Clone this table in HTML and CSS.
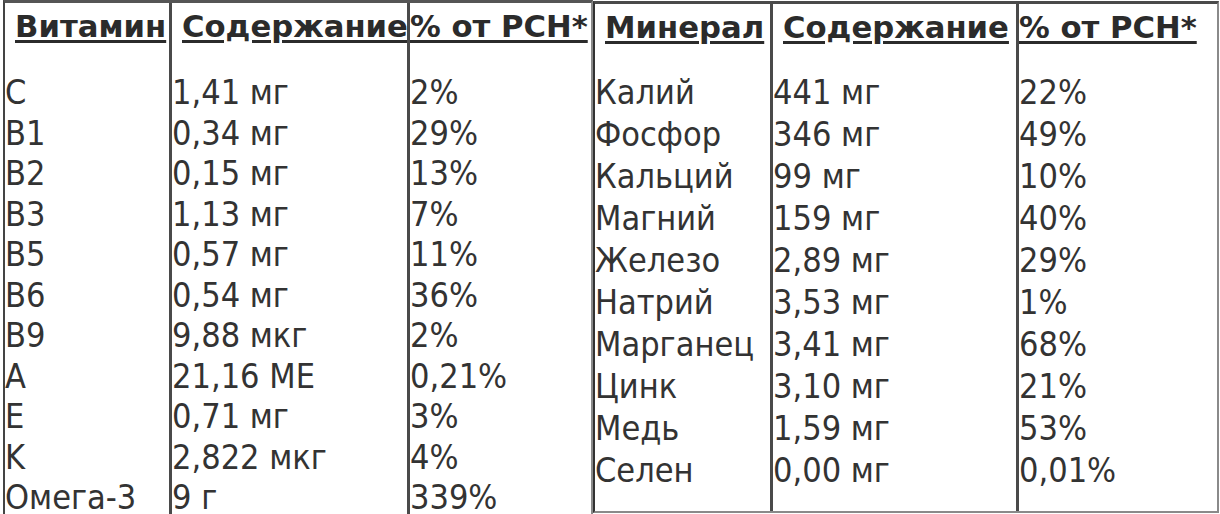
FILE: index.html
```html
<!DOCTYPE html>
<html lang="ru">
<head>
<meta charset="utf-8">
<title>Витамины и минералы</title>
<link rel="stylesheet" href="styles.css">
</head>
<body>
<div class="page">
  <div class="panel panel-left">
    <div class="col col-a">
      <div class="head"><span class="hd pad">Витамин</span></div>
      <div class="rows">
        <div class="cell">C</div><div class="cell">B1</div><div class="cell">B2</div><div class="cell">B3</div><div class="cell">B5</div><div class="cell">B6</div><div class="cell">B9</div><div class="cell">A</div><div class="cell">E</div><div class="cell">K</div><div class="cell">Омега-3</div>
      </div>
    </div>
    <div class="col col-b sep">
      <div class="head"><span class="hd pad">Содержание</span></div>
      <div class="rows">
        <div class="cell">1,41 мг</div><div class="cell">0,34 мг</div><div class="cell">0,15 мг</div><div class="cell">1,13 мг</div><div class="cell">0,57 мг</div><div class="cell">0,54 мг</div><div class="cell">9,88 мкг</div><div class="cell">21,16 МЕ</div><div class="cell">0,71 мг</div><div class="cell">2,822 мкг</div><div class="cell">9 г</div>
      </div>
    </div>
    <div class="col col-c sep">
      <div class="head"><span class="hd">% от РСН*</span></div>
      <div class="rows">
        <div class="cell">2%</div><div class="cell">29%</div><div class="cell">13%</div><div class="cell">7%</div><div class="cell">11%</div><div class="cell">36%</div><div class="cell">2%</div><div class="cell">0,21%</div><div class="cell">3%</div><div class="cell">4%</div><div class="cell">339%</div>
      </div>
    </div>
  </div>
  <div class="panel panel-right">
    <div class="col col-d">
      <div class="head"><span class="hd pad">Минерал</span></div>
      <div class="rows">
        <div class="cell">Калий</div><div class="cell">Фосфор</div><div class="cell">Кальций</div><div class="cell">Магний</div><div class="cell">Железо</div><div class="cell">Натрий</div><div class="cell">Марганец</div><div class="cell">Цинк</div><div class="cell">Медь</div><div class="cell">Селен</div>
      </div>
    </div>
    <div class="col col-e sep">
      <div class="head"><span class="hd pad">Содержание</span></div>
      <div class="rows">
        <div class="cell">441 мг</div><div class="cell">346 мг</div><div class="cell">99 мг</div><div class="cell">159 мг</div><div class="cell">2,89 мг</div><div class="cell">3,53 мг</div><div class="cell">3,41 мг</div><div class="cell">3,10 мг</div><div class="cell">1,59 мг</div><div class="cell">0,00 мг</div>
      </div>
    </div>
    <div class="col col-f sep">
      <div class="head"><span class="hd">% от РСН*</span></div>
      <div class="rows">
        <div class="cell">22%</div><div class="cell">49%</div><div class="cell">10%</div><div class="cell">40%</div><div class="cell">29%</div><div class="cell">1%</div><div class="cell">68%</div><div class="cell">21%</div><div class="cell">53%</div><div class="cell">0,01%</div>
      </div>
    </div>
  </div>
</div>
</body>
</html>
```
FILE: styles.css
```css
html, body {
  margin: 0;
  padding: 0;
  background: #ffffff;
  overflow: hidden;
}
body {
  width: 1220px;
  height: 514px;
}
.page {
  display: flex;
  align-items: flex-start;
  padding-left: 3px;
  color: #333333;
}
.panel {
  display: flex;
  align-items: stretch;
  background: #ffffff;
  box-sizing: border-box;
}
.panel-left {
  width: 590px;
  height: 514px;
  overflow: hidden;
  border-top: 3px solid #555555;
  border-left: 2px solid #444444;
  border-right: 2px solid #8a8a8a;
}
.panel-right {
  width: 626px;
  margin-top: 1px;
  border-top: 3px solid #4a4a4a;
  border-left: 2px solid #333333;
  border-right: 2px solid #8a8a8a;
  border-bottom: 2px solid #8a8a8a;
}
.col {
  display: flex;
  flex-direction: column;
  overflow: hidden;
  box-sizing: border-box;
}
.sep {
  border-left: 3px solid #4a4a4a;
}
.col-a { width: 164px; }
.col-b { width: 238px; }
.col-c { width: 184px; }
.col-d { width: 175px; }
.col-e { width: 246px; }
.col-f { width: 201px; }
.head {
  height: 48px;
  line-height: 48px;
  white-space: nowrap;
  font-family: "DejaVu Sans", Verdana, sans-serif;
  font-weight: bold;
  font-size: 30.7px;
  color: #2b2b2b;
}
.hd {
  text-decoration: underline;
  text-decoration-thickness: 3px;
  text-underline-offset: 3px;
}
.pad {
  margin-left: 10px;
}
.rows {
  display: flex;
  flex-direction: column;
}
.panel-left .rows { padding-top: 21px; }
.panel-right .rows { padding-top: 19px; padding-bottom: 20px; }
.cell {
  white-space: nowrap;
  font-family: "DejaVu Sans Condensed", "DejaVu Sans", sans-serif;
  font-stretch: condensed;
  font-size: 34px;
  color: #333333;
}
.panel-left .cell { height: 40.5px; line-height: 40.5px; }
.panel-right .cell { height: 42px; line-height: 42px; }
```
